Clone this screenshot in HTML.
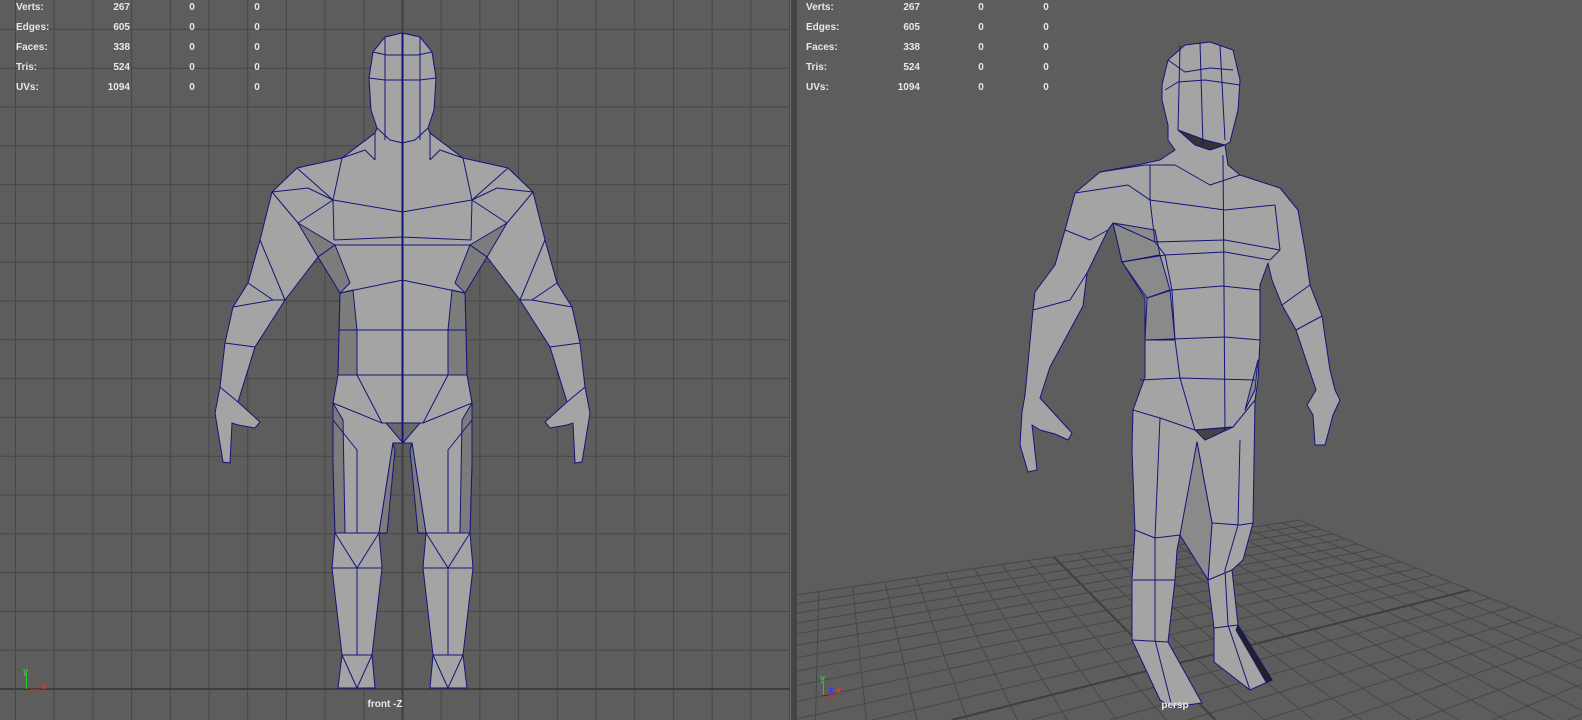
<!DOCTYPE html>
<html><head><meta charset="utf-8"><style>
html,body{margin:0;padding:0;background:#5d5d5d;width:1582px;height:720px;overflow:hidden;position:relative}
svg{position:absolute;left:0;top:0}
text{font-family:"Liberation Sans",sans-serif;font-size:10px;font-weight:bold;fill:#e8e8e8}
</style></head><body><svg id="s" width="1582" height="720" viewBox="0 0 1582 720" xmlns="http://www.w3.org/2000/svg">
<rect x="0" y="0" width="790" height="720" fill="#5d5d5d"/>
<rect x="797" y="0" width="785" height="720" fill="#5d5d5d"/>
<rect x="790" y="0" width="1" height="720" fill="#6a6a6a"/>
<rect x="791" y="0" width="6" height="720" fill="#444"/>
<g id="g1" stroke="#474747" stroke-width="1" fill="none"></g>
<g id="g2" stroke="#474747" stroke-width="1" fill="none"></g>
<g id="fig1"></g>
<g id="fig2" fill="#a4a4a4" stroke="#14147a" stroke-width="1" stroke-linejoin="round">
<polygon points="1168,140 1175,150 1160,160 1142,164 1100,172 1075,193 1065,230 1055,265 1035,292 1033,310 1025,395 1022,412 1020,445 1028,472 1037,470 1032,425 1040,430 1055,434 1068,440 1072,433 1040,398 1050,367 1083,306 1087,273 1108,230 1113,223 1122,262 1145,298 1145,377 1133,410 1132,450 1135,530 1132,580 1132,640 1160,700 1172,707 1202,703 1168,642 1175,580 1177,550 1180,535 1188,500 1197,442 1212,523 1208,580 1214,628 1214,662 1250,690 1272,680 1238,625 1232,570 1243,560 1253,523 1255,400 1258,380 1260,340 1260,285 1268,263 1272,280 1282,305 1296,330 1316,390 1307,405 1313,415 1315,445 1325,445 1333,415 1340,400 1335,390 1330,370 1322,316 1310,285 1305,250 1298,210 1280,188 1240,175 1228,165 1225,145 1230,142 1238,110 1240,80 1233,50 1210,42 1185,45 1168,60 1162,85 1162,100 1168,125"/>
<g fill="#8a8a8a">
<polygon points="1113,223 1155,230 1160,255 1122,262"/>
<polygon points="1122,262 1160,255 1170,290 1147,298"/>
<polygon points="1147,298 1170,290 1175,340 1145,340"/>
<polygon points="1258,360 1255,390 1245,410"/>
<polygon points="1180,535 1197,442 1212,523 1208,580"/>
</g>
<polygon points="1178,130 1195,145 1210,150 1225,145 1205,140" fill="#333"/>
<polygon points="1195,430 1233,427 1205,440" fill="#444"/>
<polygon points="1238,625 1272,680 1266,682 1236,630" fill="#222"/>
<g fill="none">
<polyline points="1168,60 1185,72 1210,68 1233,70"/>
<polyline points="1165,90 1178,82 1205,80 1240,85"/>
<polyline points="1200,42 1203,145"/><polyline points="1180,45 1178,130"/><polyline points="1220,45 1225,140"/>
<polyline points="1100,172 1145,165 1175,165 1210,185 1240,175"/>
<polyline points="1075,193 1128,185 1150,200 1225,210 1275,205"/>
<polyline points="1113,223 1155,242 1225,240 1280,250"/>
<polyline points="1122,262 1165,255 1225,252 1270,260"/>
<polyline points="1147,298 1172,290 1222,286 1260,290"/>
<polyline points="1145,340 1225,337 1260,340"/>
<polyline points="1140,380 1180,378 1255,380"/>
<polyline points="1133,410 1160,418 1195,430 1233,427 1255,400"/>
<polyline points="1223,155 1225,430"/>
<polyline points="1150,165 1150,200 1155,242 1165,255 1172,290 1175,340 1180,378 1195,430"/>
<polyline points="1275,205 1280,250 1270,260"/>
<polyline points="1033,310 1070,300 1087,273"/>
<polyline points="1065,230 1090,240 1108,230"/>
<polyline points="1296,330 1322,316"/><polyline points="1282,305 1310,285"/>
<polyline points="1135,530 1155,538 1180,535"/>
<polyline points="1212,523 1240,525 1253,523"/>
<polyline points="1133,580 1175,580"/><polyline points="1208,580 1232,570"/>
<polyline points="1132,640 1168,642"/><polyline points="1214,628 1238,625"/>
<polyline points="1160,418 1155,538 1155,640 1172,707"/>
<polyline points="1240,440 1238,525 1225,570 1228,625 1250,690"/>
</g>
</g>
<g font-size="10">
<text x="16" y="10">Verts:</text><text x="16" y="30">Edges:</text><text x="16" y="50">Faces:</text><text x="16" y="70">Tris:</text><text x="16" y="90">UVs:</text>
<g text-anchor="end"><text x="130" y="10">267</text><text x="130" y="30">605</text><text x="130" y="50">338</text><text x="130" y="70">524</text><text x="130" y="90">1094</text></g>
<g text-anchor="middle"><text x="192" y="10">0</text><text x="192" y="30">0</text><text x="192" y="50">0</text><text x="192" y="70">0</text><text x="192" y="90">0</text>
<text x="257" y="10">0</text><text x="257" y="30">0</text><text x="257" y="50">0</text><text x="257" y="70">0</text><text x="257" y="90">0</text></g>
<text x="806" y="10">Verts:</text><text x="806" y="30">Edges:</text><text x="806" y="50">Faces:</text><text x="806" y="70">Tris:</text><text x="806" y="90">UVs:</text>
<g text-anchor="end"><text x="920" y="10">267</text><text x="920" y="30">605</text><text x="920" y="50">338</text><text x="920" y="70">524</text><text x="920" y="90">1094</text></g>
<g text-anchor="middle"><text x="981" y="10">0</text><text x="981" y="30">0</text><text x="981" y="50">0</text><text x="981" y="70">0</text><text x="981" y="90">0</text>
<text x="1046" y="10">0</text><text x="1046" y="30">0</text><text x="1046" y="50">0</text><text x="1046" y="70">0</text><text x="1046" y="90">0</text></g>
<text x="385" y="707" text-anchor="middle">front -Z</text>
<text x="1175" y="708" text-anchor="middle">persp</text>
</g>
<g stroke-width="1">
<line x1="26.5" y1="674" x2="26.5" y2="690" stroke="#2c2"/><line x1="26" y1="690" x2="40" y2="690" stroke="#d22"/><line x1="24" y1="689.5" x2="30" y2="689.5" stroke="#22d"/>
<text x="23" y="674" style="fill:#3c3;font-size:9px">y</text><text x="41" y="689" style="fill:#e33;font-size:9px">x</text>
<line x1="823.5" y1="682" x2="823.5" y2="696" stroke="#2c2"/><line x1="823" y1="696" x2="835" y2="696" stroke="#d22"/><line x1="822" y1="695.5" x2="828" y2="695.5" stroke="#22d"/>
<text x="820" y="681" style="fill:#3c3;font-size:9px">y</text><text x="829" y="693" style="fill:#33f;font-size:9px">z</text><text x="836" y="693" style="fill:#e33;font-size:9px">x</text>
</g>
</svg><script>
var NS="http://www.w3.org/2000/svg";
function L(g,x1,y1,x2,y2,w,c){var l=document.createElementNS(NS,"line");l.setAttribute("x1",x1);l.setAttribute("y1",y1);l.setAttribute("x2",x2);l.setAttribute("y2",y2);if(w)l.setAttribute("stroke-width",w);if(c)l.setAttribute("stroke",c);g.appendChild(l);}
function clip(x1,y1,x2,y2,xmin,ymin,xmax,ymax){var dx=x2-x1,dy=y2-y1,t0=0,t1=1,p=[-dx,dx,-dy,dy],q=[x1-xmin,xmax-x1,y1-ymin,ymax-y1];for(var i=0;i<4;i++){if(p[i]==0){if(q[i]<0)return null;}else{var r=q[i]/p[i];if(p[i]<0){if(r>t1)return null;if(r>t0)t0=r;}else{if(r<t0)return null;if(r<t1)t1=r;}}}return[x1+t0*dx,y1+t0*dy,x1+t1*dx,y1+t1*dy];}
var g1=document.getElementById("g1");
for(var k=-11;k<=11;k++){var x=402.5+k*38.7;if(x<0||x>790)continue;L(g1,x,0,x,720,k==0?2:1,k==0?"#3e3e3e":null);}
for(var k=-18;k<=1;k++){var y=689+k*38.8;if(y<0||y>720)continue;L(g1,0,y,790,y,k==0?2:1,k==0?"#3e3e3e":null);}
var a=0.02742,b=0.04,VA=[2403,356],VB=[826,327],O=[1163,667];
function P(u,v){var w=a*u+b*v+1;return[(a*u*VA[0]+b*v*VB[0]+O[0])/w,(a*u*VA[1]+b*v*VB[1]+O[1])/w];}
var g2=document.getElementById("g2");
function CL(p,q,w,c){var r=clip(p[0],p[1],q[0],q[1],797,0,1582,720);if(r)L(g2,r[0],r[1],r[2],r[3],w,c);}
for(var k=-12;k<=12;k++){CL(P(k,-12),P(k,12),k==0?2:1,k==0?"#3e3e3e":null);CL(P(-12,k),P(12,k),k==0?2:1,k==0?"#3e3e3e":null);}
var R=[[402,33],[420,37],[432,52],[436,78],[434,110],[428,128],[430,133],[463,158],[508,168],[533,192],[545,240],[557,283],[572,307],[580,343],[585,387],[590,413],[582,462],[575,463],[573,423],[567,425],[550,428],[545,422],[567,402],[550,347],[520,300],[487,257],[470,245],[465,293],[467,375],[472,403],[472,463],[470,533],[473,568],[463,655],[467,688],[430,688],[433,655],[423,568],[426,533],[412,443],[403,443]];
var pts=R.map(function(p){return p.join(",")});for(var i=R.length-2;i>=1;i--)pts.push((805-R[i][0])+","+R[i][1]);
var f=document.getElementById("fig1");
var html='<polygon points="'+pts.join(" ")+'" fill="#a4a4a4" stroke="#14147a"/>';
function mir(a){var s=a.map(function(p){return p.join(",")}).join(" ");var m=a.map(function(p){return (805-p[0])+","+p[1]}).join(" ");return [s,m];}
var darks=[[[470,245],[507,223],[487,257]],[[470,245],[487,257],[465,293],[455,283]],[[465,293],[467,375],[448,375],[448,330],[452,290]],[[472,403],[472,463],[470,533],[460,533],[462,420]],[[412,443],[426,533],[418,533],[410,450]]];
darks.forEach(function(d){var m=mir(d);html+='<polygon points="'+m[0]+'" fill="#7c7c7c" stroke="#14147a"/><polygon points="'+m[1]+'" fill="#7c7c7c" stroke="#14147a"/>';});
html+='<polygon points="386,423 420,423 403,443" fill="#6a6a6a" stroke="#14147a"/>';
var lines=[[[402,33],[402,443]],[[436,78],[420,80],[402,80]],[[432,52],[418,55],[402,55]],[[420,37],[420,140]],[[428,128],[415,140],[402,143]],[[430,133],[430,160]],[[463,158],[472,200],[402,212]],[[508,168],[472,200],[471,240]],[[533,192],[497,188],[472,200]],[[533,192],[507,223]],[[472,200],[507,223]],[[471,240],[402,237]],[[470,245],[402,245]],[[465,293],[402,280]],[[467,330],[402,330]],[[467,375],[402,375]],[[472,403],[423,423],[387,423]],[[467,375],[448,375],[423,423]],[[470,533],[426,533]],[[473,568],[423,568]],[[463,655],[433,655]],[[426,533],[448,568],[470,533]],[[433,655],[448,688],[463,655]],[[448,568],[448,655]],[[557,283],[532,300],[520,300]],[[572,307],[532,300]],[[545,240],[520,300]],[[580,343],[550,347]],[[585,387],[567,402]],[[463,158],[440,150],[430,160]],[[472,420],[448,450],[448,533]]];
lines.forEach(function(l){var m=mir(l);html+='<polyline points="'+m[0]+'" fill="none" stroke="#14147a"/><polyline points="'+m[1]+'" fill="none" stroke="#14147a"/>';});
f.innerHTML=html;
</script></body></html>
